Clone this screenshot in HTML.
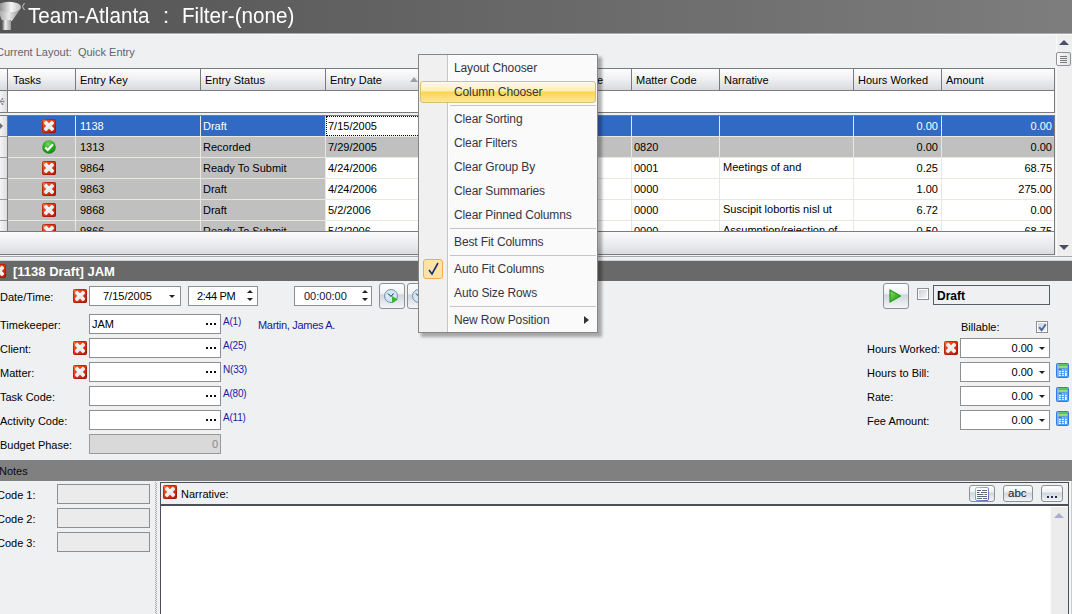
<!DOCTYPE html>
<html><head><meta charset="utf-8">
<style>
*{margin:0;padding:0;box-sizing:border-box}
html,body{width:1072px;height:614px;overflow:hidden;background:#eff0f2;font-family:"Liberation Sans",sans-serif;font-size:11px;color:#000}
.a{position:absolute}
.t{position:absolute;white-space:pre;line-height:1}
.box{position:absolute;background:#fff;border:1px solid #8e8f91}
.hd{position:absolute;top:68px;height:23px;border-top:1px solid #7b7b7b;border-bottom:1px solid #7b7b7b;background:linear-gradient(#fdfdfd,#f1f1f3 45%,#e3e4e7 75%,#d9dadd)}
.vl{position:absolute;width:1px}
.hl{position:absolute;height:1px}
.rx{position:absolute;width:14px;height:14px;border-radius:2px;background:linear-gradient(135deg,#ff9a50 0%,#f04a1e 25%,#dc2c0c 60%,#b01606 100%);box-shadow:inset 0 0 0 1px rgba(150,20,5,.6)}
.rx:before,.rx:after{content:"";position:absolute;left:1px;top:5px;width:12px;height:4px;background:linear-gradient(#f8fafc,#dfe6ea);border-radius:1.5px;transform:rotate(45deg)}
.rx:after{transform:rotate(-45deg)}
.dd{position:absolute;width:0;height:0;border-left:3px solid transparent;border-right:3px solid transparent;border-top:3px solid #222}
.mi{position:absolute;left:454px;font-size:12px;color:#353545;line-height:1;letter-spacing:-.12px;white-space:pre}
.sep{position:absolute;left:450px;width:146px;height:1px;background:#c5c5c5}
.calc{position:absolute;width:12px;height:14px;border-radius:1px;background:linear-gradient(#5fae5a 0,#5fae5a 4px,#3d7fd6 4px);border:1px solid #2f68b8}
.calc:after{content:"";position:absolute;left:1px;top:4px;width:8px;height:7px;background:repeating-linear-gradient(90deg,#fff 0 2px,transparent 2px 3px);-webkit-mask:repeating-linear-gradient(#000 0 1px,transparent 1px 2px)}
.lab{color:#000}
.dots{position:absolute;left:206px;width:2px;height:2px;background:#111;box-shadow:4px 0 #111,8px 0 #111}
.sm{position:absolute;font-size:10px;letter-spacing:-.2px;color:#1c1ca0;white-space:pre;line-height:1}
.btn{position:absolute;border:1px solid #8e8f93;border-radius:3px;background:linear-gradient(#fdfdfd,#eef0f2 42%,#cdd5de 45%,#e6eaee 80%,#f4f5f7)}
</style></head><body>

<!-- title bar -->
<div class="a" style="left:0;top:0;width:1072px;height:33px;background:linear-gradient(90deg,#545454 0,#555 40px,#7d7d7d 1072px)"></div>
<div class="a" style="left:0;top:33px;width:1072px;height:1px;background:#a9aaac"></div>
<div class="a" style="left:0;top:34px;width:1072px;height:1px;background:#fafafa"></div>
<!-- funnel -->
<svg class="a" style="left:0;top:0" width="28" height="33" viewBox="0 0 28 33">
<defs><linearGradient id="fg" x1="0" x2="1"><stop offset="0" stop-color="#7a7a7a"/><stop offset=".6" stop-color="#f6f6f6"/><stop offset="1" stop-color="#bdbdbd"/></linearGradient>
<linearGradient id="fg2" x1="0" x2="1"><stop offset="0" stop-color="#9a9a9a"/><stop offset=".5" stop-color="#e8e8e8"/><stop offset="1" stop-color="#8a8a8a"/></linearGradient>
<linearGradient id="fg3" x1="0" x2="1"><stop offset="0" stop-color="#555"/><stop offset=".35" stop-color="#f0f0f0"/><stop offset="1" stop-color="#9a9a9a"/></linearGradient></defs>
<path d="M-3 8 L21 8 L12 21 L2 21 Z" fill="url(#fg2)"/>
<rect x="2" y="20" width="9" height="10" fill="url(#fg3)"/>
<ellipse cx="9" cy="7" rx="12" ry="5.3" fill="url(#fg)"/>
<path d="M24.5 3 L22.5 6.5 L24.5 10" stroke="#c8c8c8" fill="none" stroke-width="1"/>
</svg>
<div class="t" style="left:28px;top:6px;font-size:21.5px;color:#fff;transform:scaleX(.96);transform-origin:0 0">Team-Atlanta</div>
<div class="t" style="left:163px;top:6px;font-size:21.5px;color:#fff">:</div>
<div class="t" style="left:182px;top:6px;font-size:21.5px;color:#fff;transform:scaleX(.96);transform-origin:0 0">Filter-(none)</div>

<div class="t" style="left:-4px;top:47px;color:#63636c">Current Layout:  Quick Entry</div>

<!-- vertical scrollbar grid -->
<div class="a" style="left:1056px;top:35px;width:16px;height:221px;background:#efefef;border-left:1px solid #fbfbfb"></div>
<div class="a" style="left:1059px;top:40px;width:0;height:0;border-left:5px solid transparent;border-right:5px solid transparent;border-bottom:5px solid #4a5068"></div>
<div class="a" style="left:1056px;top:52px;width:15px;height:14px;border:1px solid #8f9297;border-radius:2px;background:linear-gradient(90deg,#f8f8f8,#e4e5e8)"></div>
<div class="a" style="left:1060px;top:56px;width:7px;height:1px;background:#7a7a7a;box-shadow:0 2px #7a7a7a,0 4px #7a7a7a,0 6px #7a7a7a"></div>
<div class="a" style="left:1059px;top:245px;width:0;height:0;border-left:5px solid transparent;border-right:5px solid transparent;border-top:5px solid #4a5068"></div>

<!-- grid header -->
<div class="hd" style="left:0;width:1055px;border-right:1px solid #7b7b7b"></div>
<div class="vl" style="left:7px;top:68px;height:23px;background:#7b7b7b"></div>
<div class="vl" style="left:75px;top:68px;height:23px;background:#7b7b7b"></div>
<div class="vl" style="left:200px;top:68px;height:23px;background:#7b7b7b"></div>
<div class="vl" style="left:325px;top:68px;height:23px;background:#7b7b7b"></div>
<div class="vl" style="left:631px;top:68px;height:23px;background:#7b7b7b"></div>
<div class="vl" style="left:719px;top:68px;height:23px;background:#7b7b7b"></div>
<div class="vl" style="left:853px;top:68px;height:23px;background:#7b7b7b"></div>
<div class="vl" style="left:941px;top:68px;height:23px;background:#7b7b7b"></div>
<div class="t" style="left:13px;top:75px">Tasks</div>
<div class="t" style="left:80px;top:75px">Entry Key</div>
<div class="t" style="left:205px;top:75px">Entry Status</div>
<div class="t" style="left:330px;top:75px">Entry Date</div>
<div class="a" style="left:410px;top:77px;width:0;height:0;border-left:4px solid transparent;border-right:4px solid transparent;border-bottom:5px solid #9aa0ab"></div>
<div class="t" style="left:597px;top:75px">e</div>
<div class="t" style="left:636px;top:75px">Matter Code</div>
<div class="t" style="left:724px;top:75px">Narrative</div>
<div class="t" style="left:858px;top:75px">Hours Worked</div>
<div class="t" style="left:946px;top:75px">Amount</div>

<!-- filter row -->
<div class="a" style="left:0;top:91px;width:1055px;height:22px;background:#fff;border-right:1px solid #7b7b7b;border-bottom:1px solid #7b7b7b"></div>
<div class="a" style="left:0;top:91px;width:7px;height:21px;background:linear-gradient(90deg,#f4f4f5,#dcdde0)"></div>
<div class="vl" style="left:7px;top:91px;height:22px;background:#7b7b7b"></div>
<svg class="a" style="left:-3px;top:97px" width="8" height="9" viewBox="0 0 8 9"><path d="M3 4.5H6.5M3 4.5L5.3 2M3 4.5L5.3 7" stroke="#8a8a8a" stroke-width="1" fill="none"/><circle cx="5.5" cy="1.8" r=".9" fill="#888"/><circle cx="6.6" cy="4.5" r=".9" fill="#888"/><circle cx="5.5" cy="7.2" r=".9" fill="#888"/></svg>

<!-- rows area -->
<div class="a" style="left:0;top:115px;width:1055px;height:116px;background:#fff;border-top:1px solid #7b7b7b;border-right:1px solid #7b7b7b"></div>
<!-- row selectors -->
<div class="a" style="left:0;top:116px;width:7px;height:115px;background:linear-gradient(90deg,#f4f4f5,#dcdde0)"></div>
<div class="vl" style="left:7px;top:116px;height:115px;background:#7b7b7b"></div>
<div class="hl" style="left:0;top:136px;width:7px;background:#9a9a9a"></div>
<div class="hl" style="left:0;top:157px;width:7px;background:#9a9a9a"></div>
<div class="hl" style="left:0;top:178px;width:7px;background:#9a9a9a"></div>
<div class="hl" style="left:0;top:199px;width:7px;background:#9a9a9a"></div>
<div class="hl" style="left:0;top:220px;width:7px;background:#9a9a9a"></div>
<div class="a" style="left:0;top:123px;width:0;height:0;border-top:3px solid transparent;border-bottom:3px solid transparent;border-left:3px solid #6d6d6d"></div>

<!-- row1 selected -->
<div class="a" style="left:8px;top:116px;width:1046px;height:20px;background:#316ac5"></div>
<div class="a" style="left:326px;top:116px;width:92px;height:20px;background:#fff;border:1px dotted #000;border-right:none"></div>
<!-- row2 gray -->
<div class="a" style="left:8px;top:137px;width:1046px;height:20px;background:#c0c0c0"></div>
<!-- rows 3-6 gray part -->
<div class="a" style="left:8px;top:158px;width:318px;height:73px;background:#c0c0c0"></div>
<!-- grid lines -->
<div class="hl" style="left:8px;top:136px;width:1046px;background:#e9e7df"></div>
<div class="hl" style="left:8px;top:157px;width:1046px;background:#e9e7df"></div>
<div class="hl" style="left:8px;top:178px;width:1046px;background:#e9e7df"></div>
<div class="hl" style="left:8px;top:199px;width:1046px;background:#e9e7df"></div>
<div class="hl" style="left:8px;top:220px;width:1046px;background:#e9e7df"></div>
<div class="vl" style="left:75px;top:116px;height:115px;background:#e9e7df"></div>
<div class="vl" style="left:200px;top:116px;height:115px;background:#e9e7df"></div>
<div class="vl" style="left:325px;top:116px;height:115px;background:#e9e7df"></div>
<div class="vl" style="left:631px;top:116px;height:115px;background:#e9e7df"></div>
<div class="vl" style="left:719px;top:116px;height:115px;background:#e9e7df"></div>
<div class="vl" style="left:853px;top:116px;height:115px;background:#e9e7df"></div>
<div class="vl" style="left:941px;top:116px;height:115px;background:#e9e7df"></div>

<!-- row texts -->
<div class="rx" style="left:42px;top:119px"></div>
<div class="t" style="left:80px;top:121px;color:#fff">1138</div>
<div class="t" style="left:203px;top:121px;color:#fff">Draft</div>
<div class="t" style="left:328px;top:121px">7/15/2005</div>
<div class="t" style="left:1002px;top:121px;color:#fff;width:50px;text-align:right">0.00</div>
<div class="t" style="left:900px;top:121px;color:#fff;width:50px;text-align:right">  </div>
<div class="t" style="left:888px;top:121px;color:#fff;width:50px;text-align:right">0.00</div>

<svg class="a" style="left:42px;top:140px" width="14" height="14" viewBox="0 0 14 14"><defs><radialGradient id="gc" cx=".45" cy=".3" r=".75"><stop offset="0" stop-color="#7ad85c"/><stop offset=".6" stop-color="#22a31c"/><stop offset="1" stop-color="#0e820e"/></radialGradient></defs><circle cx="7" cy="7" r="6.8" fill="url(#gc)"/><path d="M3.2 7.6 L5.8 10 L11 4.3" stroke="#fff" stroke-width="2.1" fill="none"/></svg>
<div class="t" style="left:80px;top:142px">1313</div>
<div class="t" style="left:203px;top:142px">Recorded</div>
<div class="t" style="left:328px;top:142px">7/29/2005</div>
<div class="t" style="left:634px;top:142px">0820</div>
<div class="t" style="left:888px;top:142px;width:50px;text-align:right">0.00</div>
<div class="t" style="left:1002px;top:142px;width:50px;text-align:right">0.00</div>

<div class="rx" style="left:42px;top:161px"></div>
<div class="t" style="left:80px;top:163px">9864</div>
<div class="t" style="left:203px;top:163px">Ready To Submit</div>
<div class="t" style="left:328px;top:163px">4/24/2006</div>
<div class="t" style="left:634px;top:163px">0001</div>
<div class="t" style="left:723px;top:162px">Meetings of and</div>
<div class="t" style="left:888px;top:163px;width:50px;text-align:right">0.25</div>
<div class="t" style="left:1002px;top:163px;width:50px;text-align:right">68.75</div>

<div class="rx" style="left:42px;top:182px"></div>
<div class="t" style="left:80px;top:184px">9863</div>
<div class="t" style="left:203px;top:184px">Draft</div>
<div class="t" style="left:328px;top:184px">4/24/2006</div>
<div class="t" style="left:634px;top:184px">0000</div>
<div class="t" style="left:888px;top:184px;width:50px;text-align:right">1.00</div>
<div class="t" style="left:1002px;top:184px;width:50px;text-align:right">275.00</div>

<div class="rx" style="left:42px;top:203px"></div>
<div class="t" style="left:80px;top:205px">9868</div>
<div class="t" style="left:203px;top:205px">Draft</div>
<div class="t" style="left:328px;top:205px">5/2/2006</div>
<div class="t" style="left:634px;top:205px">0000</div>
<div class="t" style="left:723px;top:204px">Suscipit lobortis nisl ut</div>
<div class="t" style="left:888px;top:205px;width:50px;text-align:right">6.72</div>
<div class="t" style="left:1002px;top:205px;width:50px;text-align:right">0.00</div>

<div class="a" style="left:0;top:221px;width:1054px;height:10px;overflow:hidden">
<div class="rx" style="left:42px;top:3px"></div>
<div class="t" style="left:80px;top:5px">9866</div>
<div class="t" style="left:203px;top:5px">Ready To Submit</div>
<div class="t" style="left:328px;top:5px">5/2/2006</div>
<div class="t" style="left:634px;top:5px">0000</div>
<div class="t" style="left:723px;top:4px">Assumption/rejection of</div>
<div class="t" style="left:888px;top:5px;width:50px;text-align:right">0.50</div>
<div class="t" style="left:1002px;top:5px;width:50px;text-align:right">68.75</div>
</div>

<!-- grid footer -->
<div class="a" style="left:0;top:231px;width:1055px;height:24px;border-top:1px solid #7b7b7b;border-bottom:1px solid #7b7b7b;border-right:1px solid #7b7b7b;background:linear-gradient(#fbfbfc,#e6e7ea 70%,#dadbdf)"></div>
<div class="hl" style="left:0;top:256px;width:1072px;background:#a5a6a9"></div>
<div class="hl" style="left:0;top:260px;width:1072px;background:#d2d3d6"></div>

<!-- detail bar -->
<div class="a" style="left:0;top:261px;width:1072px;height:20px;background:#696969"></div>
<div class="rx" style="left:-8px;top:264px"></div>
<div class="t" style="left:13px;top:265px;font-size:13px;font-weight:bold;color:#fff">[1138 Draft] JAM</div>

<!-- form left -->
<div class="t" style="left:0px;top:292px">Date/Time:</div>
<div class="rx" style="left:73px;top:289px"></div>
<div class="box" style="left:89px;top:286px;width:92px;height:20px"></div>
<div class="t" style="left:103px;top:291px">7/15/2005</div>
<div class="dd" style="left:169px;top:295px"></div>
<div class="box" style="left:188px;top:286px;width:70px;height:20px"></div>
<div class="t" style="left:197px;top:291px;letter-spacing:-.4px">2:44 PM</div>
<div class="a" style="left:247px;top:290px;width:0;height:0;border-left:3px solid transparent;border-right:3px solid transparent;border-bottom:3px solid #222"></div>
<div class="dd" style="left:247px;top:298px"></div>

<div class="box" style="left:294px;top:286px;width:78px;height:20px"></div>
<div class="t" style="left:304px;top:291px;color:#10103a">00:00:00</div>
<div class="a" style="left:362px;top:290px;width:0;height:0;border-left:3px solid transparent;border-right:3px solid transparent;border-bottom:3px solid #222"></div>
<div class="dd" style="left:362px;top:298px"></div>

<div class="btn" style="left:379px;top:283px;width:26px;height:26px"></div>
<svg class="a" style="left:383px;top:288px" width="18" height="18" viewBox="0 0 18 18"><circle cx="8" cy="8" r="6.5" fill="#cfe7f7" stroke="#7c8ea4" stroke-width="1"/><path d="M5 5.5 L8 8.5 L10.5 5.5" stroke="#222" fill="none" stroke-width="1"/><path d="M9 8 L15 11.5 L9 15 Z" fill="#39b52f"/></svg>
<div class="btn" style="left:407px;top:283px;width:26px;height:26px"></div>
<svg class="a" style="left:411px;top:288px" width="18" height="18" viewBox="0 0 18 18"><circle cx="8" cy="8" r="6.5" fill="#cfe7f7" stroke="#7c8ea4" stroke-width="1"/><path d="M5 5.5 L8 8.5 L10.5 5.5" stroke="#222" fill="none" stroke-width="1"/></svg>

<div class="t" style="left:0px;top:320px">Timekeeper:</div>
<div class="box" style="left:89px;top:314px;width:132px;height:20px"></div>
<div class="t" style="left:92px;top:319px">JAM</div>
<div class="dots" style="top:323px"></div>
<div class="sm" style="left:223px;top:317px">A(1)</div>
<div class="t" style="left:258px;top:320px;color:#1616a6;letter-spacing:-.3px">Martin, James A.</div>

<div class="t" style="left:0px;top:344px">Client:</div>
<div class="rx" style="left:73px;top:341px"></div>
<div class="box" style="left:89px;top:338px;width:132px;height:20px"></div>
<div class="dots" style="top:347px"></div>
<div class="sm" style="left:223px;top:341px">A(25)</div>

<div class="t" style="left:0px;top:368px">Matter:</div>
<div class="rx" style="left:73px;top:365px"></div>
<div class="box" style="left:89px;top:362px;width:132px;height:20px"></div>
<div class="dots" style="top:371px"></div>
<div class="sm" style="left:223px;top:365px">N(33)</div>

<div class="t" style="left:0px;top:392px">Task Code:</div>
<div class="box" style="left:89px;top:386px;width:132px;height:20px"></div>
<div class="dots" style="top:395px"></div>
<div class="sm" style="left:223px;top:389px">A(80)</div>

<div class="t" style="left:0px;top:416px">Activity Code:</div>
<div class="box" style="left:89px;top:410px;width:132px;height:20px"></div>
<div class="dots" style="top:419px"></div>
<div class="sm" style="left:223px;top:413px">A(11)</div>

<div class="t" style="left:0px;top:440px">Budget Phase:</div>
<div class="box" style="left:89px;top:434px;width:132px;height:20px;background:#d9d9d9;border-color:#9a9a9a"></div>
<div class="t" style="left:212px;top:439px;color:#888">0</div>

<!-- form right -->
<div class="btn" style="left:883px;top:283px;width:26px;height:26px"></div>
<svg class="a" style="left:887px;top:287px" width="16" height="18" viewBox="0 0 16 18"><defs><linearGradient id="pg" x1="0" x2="1" y1="0" y2="1"><stop offset="0" stop-color="#8ee070"/><stop offset=".6" stop-color="#3fb22a"/><stop offset="1" stop-color="#2a9a1a"/></linearGradient></defs><path d="M3 3 L13.5 9 L3 15 Z" fill="url(#pg)" stroke="#2c9a20" stroke-width="1.3" stroke-linejoin="round"/></svg>
<div class="a" style="left:917px;top:288px;width:12px;height:12px;border:1px solid #8e8f91;background:#fff;padding:1px"><div style="width:100%;height:100%;background:linear-gradient(135deg,#cdd3db,#f6f6f6)"></div></div>
<div class="a" style="left:933px;top:285px;width:117px;height:20px;border:1px solid #555c66"></div>
<div class="t" style="left:937px;top:290px;font-size:12px;font-weight:bold;color:#000">Draft</div>

<div class="t" style="left:961px;top:322px">Billable:</div>
<div class="a" style="left:1036px;top:321px;width:12px;height:12px;border:1px solid #8e8f91;background:#fff;padding:1px"><div style="width:100%;height:100%;background:linear-gradient(135deg,#cdd3db,#f0f1f3)"></div></div>
<svg class="a" style="left:1038px;top:323px" width="9" height="9" viewBox="0 0 9 9"><path d="M1.2 4.2 L3.6 7.2 L7.8 1.2" stroke="#4d6a9c" stroke-width="2" fill="none"/></svg>

<div class="t" style="left:867px;top:344px">Hours Worked:</div>
<div class="rx" style="left:944px;top:341px"></div>
<div class="box" style="left:960px;top:338px;width:90px;height:20px"></div>
<div class="t" style="left:983px;top:343px;width:50px;text-align:right">0.00</div>
<div class="dd" style="left:1039px;top:347px"></div>

<div class="t" style="left:867px;top:368px">Hours to Bill:</div>
<div class="box" style="left:960px;top:362px;width:90px;height:20px"></div>
<div class="t" style="left:983px;top:367px;width:50px;text-align:right">0.00</div>
<div class="dd" style="left:1039px;top:371px"></div>
<svg class="a" style="left:1056px;top:363px" width="13" height="15" viewBox="0 0 13 15"><rect x=".5" y=".5" width="12" height="14" rx="1" fill="#4f9ff0" stroke="#2e7ee0"/><rect x="1.5" y="1.5" width="1" height="12" fill="#a8d4fa"/><rect x="2.5" y="1.5" width="9" height="3.5" fill="#8fe070"/><rect x="2.5" y="1.5" width="9" height="1.5" fill="#5cc040"/><rect x="2.5" y="5.8" width="2.5" height="1.4" rx=".6" fill="#e0402a"/><rect x="6" y="5.8" width="1.6" height="1.4" fill="#b8a890"/><rect x="8.8" y="5.8" width="1.6" height="1.4" fill="#b8a890"/><path d="M3 8.3h1.8M6 8.3h1.8M9 8.3h1.8M3 10.3h1.8M6 10.3h1.8M3 12.3h1.8M6 12.3h1.8" stroke="#f4faff" stroke-width="1.2"/><rect x="9" y="9.6" width="1.8" height="3.4" fill="#f4faff"/></svg>

<div class="t" style="left:867px;top:392px">Rate:</div>
<div class="box" style="left:960px;top:386px;width:90px;height:20px"></div>
<div class="t" style="left:983px;top:391px;width:50px;text-align:right">0.00</div>
<div class="dd" style="left:1039px;top:395px"></div>
<svg class="a" style="left:1056px;top:387px" width="13" height="15" viewBox="0 0 13 15"><rect x=".5" y=".5" width="12" height="14" rx="1" fill="#4f9ff0" stroke="#2e7ee0"/><rect x="1.5" y="1.5" width="1" height="12" fill="#a8d4fa"/><rect x="2.5" y="1.5" width="9" height="3.5" fill="#8fe070"/><rect x="2.5" y="1.5" width="9" height="1.5" fill="#5cc040"/><rect x="2.5" y="5.8" width="2.5" height="1.4" rx=".6" fill="#e0402a"/><rect x="6" y="5.8" width="1.6" height="1.4" fill="#b8a890"/><rect x="8.8" y="5.8" width="1.6" height="1.4" fill="#b8a890"/><path d="M3 8.3h1.8M6 8.3h1.8M9 8.3h1.8M3 10.3h1.8M6 10.3h1.8M3 12.3h1.8M6 12.3h1.8" stroke="#f4faff" stroke-width="1.2"/><rect x="9" y="9.6" width="1.8" height="3.4" fill="#f4faff"/></svg>

<div class="t" style="left:867px;top:416px">Fee Amount:</div>
<div class="box" style="left:960px;top:410px;width:90px;height:20px"></div>
<div class="t" style="left:983px;top:415px;width:50px;text-align:right">0.00</div>
<div class="dd" style="left:1039px;top:419px"></div>
<svg class="a" style="left:1056px;top:411px" width="13" height="15" viewBox="0 0 13 15"><rect x=".5" y=".5" width="12" height="14" rx="1" fill="#4f9ff0" stroke="#2e7ee0"/><rect x="1.5" y="1.5" width="1" height="12" fill="#a8d4fa"/><rect x="2.5" y="1.5" width="9" height="3.5" fill="#8fe070"/><rect x="2.5" y="1.5" width="9" height="1.5" fill="#5cc040"/><rect x="2.5" y="5.8" width="2.5" height="1.4" rx=".6" fill="#e0402a"/><rect x="6" y="5.8" width="1.6" height="1.4" fill="#b8a890"/><rect x="8.8" y="5.8" width="1.6" height="1.4" fill="#b8a890"/><path d="M3 8.3h1.8M6 8.3h1.8M9 8.3h1.8M3 10.3h1.8M6 10.3h1.8M3 12.3h1.8M6 12.3h1.8" stroke="#f4faff" stroke-width="1.2"/><rect x="9" y="9.6" width="1.8" height="3.4" fill="#f4faff"/></svg>

<!-- notes -->
<div class="a" style="left:0;top:460px;width:1072px;height:21px;background:#808080"></div>
<div class="t" style="left:-1px;top:466px;color:#0a0a0a">Notes</div>

<div class="t" style="left:-3px;top:490px">Code 1:</div>
<div class="box" style="left:57px;top:484px;width:93px;height:20px;background:#ebebeb;border-color:#8e8f91"></div>
<div class="t" style="left:-3px;top:514px">Code 2:</div>
<div class="box" style="left:57px;top:508px;width:93px;height:20px;background:#ebebeb;border-color:#8e8f91"></div>
<div class="t" style="left:-3px;top:538px">Code 3:</div>
<div class="box" style="left:57px;top:532px;width:93px;height:20px;background:#ebebeb;border-color:#8e8f91"></div>

<!-- splitter -->
<div class="vl" style="left:155px;top:482px;height:132px;background:repeating-linear-gradient(#aaa 0 1px,#eee 1px 2px)"></div>
<div class="vl" style="left:156px;top:482px;height:132px;background:repeating-linear-gradient(#eee 0 1px,#aaa 1px 2px)"></div>

<!-- narrative panel -->
<div class="a" style="left:160px;top:482px;width:909px;height:140px;border:1px solid #4a4f58;border-bottom:none;background:#fff"></div>
<div class="a" style="left:161px;top:483px;width:907px;height:21px;background:#eff0f2"></div>
<div class="a" style="left:161px;top:504px;width:907px;height:2px;background:#4a4f58"></div>
<div class="rx" style="left:163px;top:485px"></div>
<div class="t" style="left:181px;top:489px">Narrative:</div>
<div class="btn" style="left:969px;top:485px;width:26px;height:17px"></div>
<svg class="a" style="left:975px;top:487px" width="14" height="14" viewBox="0 0 14 14"><defs><linearGradient id="dg" x1="0" y1="0" x2="1" y2="1"><stop offset="0" stop-color="#9cc4f8"/><stop offset="1" stop-color="#5a5fb0"/></linearGradient></defs><rect x=".5" y=".5" width="13" height="13" rx="1.5" fill="#fff" stroke="url(#dg)"/><path d="M2 3.5h4M7 3.5h5M2 5.5h2.5M6 5.5h6M2 7.5h6.5M9.5 7.5h2.5M2 9.5h10M2 11.5h5M8 11.5h4" stroke="#5a6878" stroke-width="1"/></svg>
<div class="btn" style="left:1003px;top:485px;width:30px;height:17px"></div>
<div class="t" style="left:1008px;top:488px;font-size:11.5px;color:#1a1a2a">abc</div>
<div class="btn" style="left:1041px;top:485px;width:22px;height:17px"></div>
<div class="a" style="left:1047px;top:496px;width:2px;height:2px;background:#2a2a50;box-shadow:4px 0 #2a2a50,8px 0 #2a2a50"></div>
<div class="a" style="left:1050px;top:507px;width:18px;height:107px;background:#ececec;border-left:1px solid #f8f8f8"></div>
<div class="a" style="left:1054px;top:513px;width:0;height:0;border-left:5px solid transparent;border-right:5px solid transparent;border-bottom:5px solid #a7b0c8"></div>
<div class="a" style="left:1069px;top:481px;width:3px;height:133px;background:#f6f6f7"></div>
<div class="a" style="left:1071px;top:481px;width:1px;height:133px;background:#c9cacc"></div>

<!-- context menu -->
<div class="a" style="left:421px;top:57px;width:181px;height:280px;background:rgba(0,0,0,.30);filter:blur(1.5px)"></div>
<div class="a" style="left:418px;top:54px;width:180px;height:279px;background:#fafafa;border:1px solid #868686"></div>
<div class="a" style="left:419px;top:55px;width:28px;height:277px;background:#f0f0f0"></div>
<div class="vl" style="left:447px;top:55px;height:277px;background:#c5c5c5"></div>
<div class="vl" style="left:448px;top:55px;height:277px;background:#fff"></div>
<div class="a" style="left:420px;top:81px;width:176px;height:22px;border:1px solid #d9bf74;border-radius:3px;background:linear-gradient(#fefaec,#fdeeb5 45%,#fdd54c 50%,#fde79a)"></div>
<div class="mi" style="top:62px">Layout Chooser</div>
<div class="mi" style="top:86px">Column Chooser</div>
<div class="sep" style="top:105px"></div>
<div class="mi" style="top:113px">Clear Sorting</div>
<div class="mi" style="top:137px">Clear Filters</div>
<div class="mi" style="top:161px">Clear Group By</div>
<div class="mi" style="top:185px">Clear Summaries</div>
<div class="mi" style="top:209px">Clear Pinned Columns</div>
<div class="sep" style="top:228px"></div>
<div class="mi" style="top:236px">Best Fit Columns</div>
<div class="sep" style="top:255px"></div>
<div class="a" style="left:423px;top:259px;width:20px;height:20px;border:1px solid #f2a95a;border-radius:3px;background:#fde4a5"></div>
<svg class="a" style="left:427px;top:262px" width="13" height="14" viewBox="0 0 13 14"><path d="M2 8 L5 12 L11 1" stroke="#1c2a7a" stroke-width="1.6" fill="none"/></svg>
<div class="mi" style="top:263px">Auto Fit Columns</div>
<div class="mi" style="top:287px">Auto Size Rows</div>
<div class="sep" style="top:306px"></div>
<div class="mi" style="top:314px">New Row Position</div>
<div class="a" style="left:584px;top:316px;width:0;height:0;border-top:4px solid transparent;border-bottom:4px solid transparent;border-left:5px solid #333"></div>

</body></html>
